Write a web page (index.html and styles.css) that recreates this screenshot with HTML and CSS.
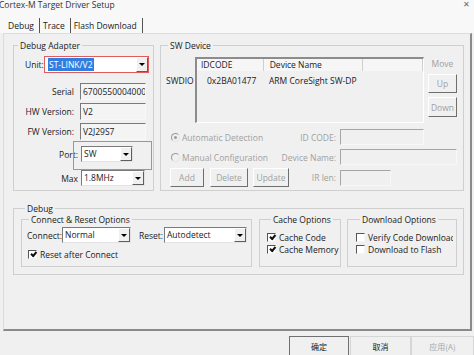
FILE: index.html
```html
<!DOCTYPE html>
<html lang="en">
<head>
    <meta charset="UTF-8">
    <title>Cortex-M Target Driver Setup</title>
    <link rel="stylesheet" href="styles.css">
</head>
<body>
    <div class="titlebar">
        <span class="title">Cortex-M Target Driver Setup</span>
        <span class="close">✕</span>
    </div>
    <div class="tabs">
        <span class="tab first">Debug</span><span class="tab">Trace</span><span class="tab">Flash Download</span>
    </div>

    <div class="panel">
        <div class="top-row">
            <fieldset class="group adapter">
                <legend>Debug Adapter</legend>
                <div class="unit-row">
                    <span class="unit-lbl">Unit:</span>
                    <div class="combo combo-unit"><span class="val"><span class="sel">ST-LINK/V2</span></span><span class="dd"></span></div>
                </div>
                <div class="field-row r-serial"><span class="lbl">Serial</span><div class="edit w-info">670055000400000</div></div>
                <div class="field-row r-hw"><span class="lbl">HW Version:</span><div class="edit w-info">V2</div></div>
                <div class="field-row r-fw"><span class="lbl">FW Version:</span><div class="edit w-info">V2J29S7</div></div>
                <div class="field-row r-port">
                    <span class="lbl lbl-short">Port:</span>
                    <div class="combo w-port"><span class="val">SW</span><span class="dd"></span></div>
                    <div class="mark"></div>
                </div>
                <div class="field-row r-max"><span class="lbl lbl-short">Max</span><div class="combo w-max"><span class="val">1.8MHz</span><span class="dd"></span></div></div>
            </fieldset>

            <fieldset class="group swdev">
                <legend>SW Device</legend>
                <div class="sw-top">
                    <span class="swdio">SWDIO</span>
                    <div class="devlist">
                        <div class="dl-head"><span class="c1">IDCODE</span><span class="c2">Device Name</span><span class="c3"></span></div>
                        <div class="dl-row"><span class="c1">0x2BA01477</span><span class="c2">ARM CoreSight SW-DP</span></div>
                    </div>
                    <div class="move-col">
                        <span class="move">Move</span>
                        <span class="wbtn b-up">Up</span>
                        <span class="wbtn b-down">Down</span>
                    </div>
                </div>
                <div class="sw-row r-auto">
                    <div class="sw-left"><i class="radio on"></i>Automatic Detection</div>
                    <span class="sw-lbl">ID CODE:</span>
                    <div class="slot"><div class="edit dis w-id"></div></div>
                </div>
                <div class="sw-row r-manual">
                    <div class="sw-left"><i class="radio"></i>Manual Configuration</div>
                    <span class="sw-lbl">Device Name:</span>
                    <div class="slot"><div class="edit dis w-name"></div></div>
                </div>
                <div class="sw-row r-btns">
                    <div class="sw-left btns">
                        <span class="wbtn b-add">Add</span>
                        <span class="wbtn b-del">Delete</span>
                        <span class="wbtn b-upd">Update</span>
                    </div>
                    <span class="sw-lbl">IR len:</span>
                    <div class="slot"><div class="edit dis w-ir"></div></div>
                </div>
            </fieldset>
        </div>

        <fieldset class="group debug">
            <legend>Debug</legend>
            <div class="debug-row">
                <fieldset class="group conn">
                    <legend>Connect &amp; Reset Options</legend>
                    <div class="conn-row">
                        <span class="conn-lbl">Connect:</span>
                        <div class="combo w-connect"><span class="val">Normal</span><span class="dd"></span></div>
                        <span class="reset-lbl">Reset:</span>
                        <div class="combo w-reset"><span class="val">Autodetect</span><span class="dd"></span></div>
                    </div>
                    <div class="check-row r-after"><i class="chk on"></i>Reset after Connect</div>
                </fieldset>
                <fieldset class="group cache">
                    <legend>Cache Options</legend>
                    <div class="check-row"><i class="chk on"></i>Cache Code</div>
                    <div class="check-row"><i class="chk on"></i>Cache Memory</div>
                </fieldset>
                <fieldset class="group download">
                    <legend>Download Options</legend>
                    <div class="check-row"><i class="chk"></i>Verify Code Download</div>
                    <div class="check-row"><i class="chk"></i>Download to Flash</div>
                </fieldset>
            </div>
        </fieldset>
    </div>

    <div class="footer">
        <span class="fbtn default">确定</span>
        <span class="fbtn">取消</span>
        <span class="fbtn off">应用(A)</span>
    </div>
</body>
</html>
```

FILE: styles.css
```css
* {
    box-sizing: border-box;
}
body {
    margin: 0;
    width: 474px;
    height: 355px;
    overflow: hidden;
    background-color: #f0f0f0;
    font-family: "Open Sans", "Noto Sans CJK SC", sans-serif;
    font-size: 8.5px;
    line-height: 11px;
    color: #1a1a1a;
}
.titlebar {
    height: 17px;
    background-color: #f8f8f8;
    display: flex;
    justify-content: space-between;
}
.title {
    margin: -1px 0 0 -1px;
    color: #333;
}
.close {
    margin: -1px 4px 0 0;
    font-size: 8px;
    line-height: 9px;
    color: #666;
}
.tabs {
    height: 16px;
    display: flex;
    align-items: center;
    background-color: #f8f8f8;
}
.tab {
    padding: 0 5px 0 3px;
    border-right: 1px solid #555;
    line-height: 15px;
}
.tab.first {
    margin-left: 5px;
}
.panel {
    margin-left: 3px;
    width: 469px;
    height: 298px;
    border: 1px solid #dcdcdc;
    border-right: 2px solid #8a8a8a;
    border-bottom: 2px solid #8a8a8a;
    padding: 6px 0 0 9px;
}

/* group boxes */
.group {
    margin: 0;
    min-width: 0;
    padding: 0;
    border: 1px solid #cfcfcf;
}
.group legend {
    padding: 0 2px;
    margin-left: 3px;
    line-height: 11px;
}
.top-row {
    display: flex;
    gap: 6px;
}
.adapter {
    width: 141px;
    height: 151px;
    padding-top: 5px;
}
.adapter legend {
    margin-left: 4px;
}
.swdev {
    width: 304px;
    height: 151px;
    padding: 6px 6px 0 5px;
}
.swdev legend {
    margin-left: 2px;
}

/* windows controls */
.combo {
    display: flex;
    height: 16px;
    background-color: #fff;
    border: 1px solid;
    border-color: #7a7a7a #e3e3e3 #e3e3e3 #7a7a7a;
}
.combo .val {
    flex: 1;
    padding-left: 2px;
    line-height: 14px;
    white-space: nowrap;
    overflow: hidden;
}
.combo .dd {
    width: 12px;
    display: flex;
    align-items: center;
    justify-content: center;
    background-color: #f0f0f0;
    border: 1px solid;
    border-color: #fff #5e5e5e #5e5e5e #fff;
}
.combo .dd::after {
    content: "";
    border-left: 3px solid transparent;
    border-right: 3px solid transparent;
    border-top: 3px solid #000;
}
.edit {
    height: 17px;
    padding-left: 2px;
    line-height: 15px;
    white-space: nowrap;
    overflow: hidden;
    background-color: #f4f4f4;
    border: 1px solid;
    border-color: #7a7a7a #f8f8f8 #f8f8f8 #7a7a7a;
}
.edit.dis {
    height: 16px;
    background-color: #f0f0f0;
    border-color: #a6a6a6 #f8f8f8 #f8f8f8 #a6a6a6;
}
.wbtn {
    display: flex;
    align-items: center;
    justify-content: center;
    color: #a0a0a0;
    background-color: #f0f0f0;
    border: 1px solid;
    border-color: #fff #6e6e6e #6e6e6e #fff;
}
.chk {
    width: 9px;
    height: 9px;
    margin-right: 3px;
    flex: none;
    background-color: #fff;
    border: 1px solid;
    border-color: #555 #f4f4f4 #f4f4f4 #555;
    position: relative;
}
.chk.on::after {
    content: "";
    position: absolute;
    left: 1px;
    top: 0;
    width: 4px;
    height: 2px;
    border-left: 2px solid #111;
    border-bottom: 2px solid #111;
    transform: rotate(-50deg) translate(0, 1px);
}
.radio {
    width: 9px;
    height: 9px;
    margin-right: 2px;
    flex: none;
    border-radius: 50%;
    border: 1px solid;
    border-color: #9a9a9a #e6e6e6 #e6e6e6 #9a9a9a;
    background-color: #f0f0f0;
    display: flex;
    align-items: center;
    justify-content: center;
}
.radio.on::after {
    content: "";
    width: 3px;
    height: 3px;
    border-radius: 50%;
    background-color: #9a9a9a;
}

/* debug adapter */
.unit-row {
    display: flex;
    height: 17px;
    align-items: center;
}
.unit-lbl {
    width: 30px;
    padding-left: 11px;
}
.combo-unit {
    width: 105px;
    height: 17px;
    border: 1px solid #e05c5c;
    padding: 1px 0 1px 3px;
}
.combo-unit .val {
    padding-left: 0;
    line-height: 13px;
}
.combo-unit .sel {
    display: inline-block;
    padding: 0 1px;
    background-color: #2f7fe0;
    color: #fff;
}
.combo-unit .dd {
    margin: -1px 0;
}
.field-row {
    display: flex;
    align-items: center;
    position: relative;
}
.field-row .lbl {
    width: 60px;
    margin-right: 6px;
    text-align: right;
}
.field-row .lbl-short {
    width: 64px;
    margin-right: 3px;
}
.w-info {
    width: 66px;
}
.r-serial { margin-top: 10px; }
.r-hw { margin-top: 3px; }
.r-fw { margin-top: 3px; }
.r-port { margin-top: 6px; }
.r-max { margin-top: 8px; }
.w-port {
    width: 52px;
}
.w-max {
    width: 64px;
}
.mark {
    position: absolute;
    left: 59px;
    top: -5px;
    width: 79px;
    height: 29px;
    border: 1px solid #e07a7a;
}

/* sw device */
.sw-top {
    display: flex;
    height: 66px;
}
.swdio {
    width: 29px;
    padding-top: 18px;
}
.devlist {
    width: 229px;
    border-top: 2px solid #8c8c8c;
    border-left: 2px solid #8c8c8c;
    border-right: 1px solid #fff;
    border-bottom: 1px solid #fff;
}
.dl-head, .dl-row {
    display: flex;
    height: 12px;
}
.dl-head span {
    border-right: 1px solid #cfcfcf;
    background-color: #f6f6f6;
}
.dl-head .c1 { width: 67px; padding-left: 4px; }
.dl-head .c2 { width: 100px; padding-left: 6px; }
.dl-head .c3 { width: 60px; }
.dl-row {
    margin-top: 4px;
}
.dl-row .c1 { width: 67px; padding-left: 10px; }
.dl-row .c2 { padding-left: 5px; }
.move-col {
    width: 29px;
    margin-left: 4px;
    display: flex;
    flex-direction: column;
}
.move {
    margin-top: 1px;
    text-align: center;
    color: #a0a0a0;
}
.b-up {
    height: 19px;
    margin-top: 5px;
}
.b-down {
    height: 20px;
    margin-top: 4px;
}
.sw-row {
    display: flex;
    align-items: center;
}
.sw-left {
    flex: 1;
    display: flex;
    align-items: center;
    padding-left: 5px;
    color: #a0a0a0;
}
.sw-lbl {
    margin-right: 4px;
    color: #a0a0a0;
}
.slot {
    width: 117px;
}
.r-auto { margin-top: 6px; }
.r-manual { margin-top: 4px; }
.r-btns { margin-top: 3px; }
.w-id { width: 84px; }
.w-name { width: 117px; }
.w-ir { width: 51px; height: 17px; }
.btns {
    padding-left: 4px;
}
.btns .wbtn {
    height: 19px;
}
.b-add { width: 34px; }
.b-del { width: 38px; margin-left: 6px; }
.b-upd { width: 36px; margin-left: 5px; }

/* debug */
.debug {
    margin-top: 12px;
    width: 451px;
    height: 72px;
    padding: 0 0 0 7px;
}
.debug legend {
    margin-left: 4px;
}
.debug-row {
    display: flex;
    gap: 6px;
}
.conn {
    width: 231px;
    height: 53px;
    padding: 2px 0 0 5px;
}
.conn legend {
    margin-left: 2px;
}
.conn-row {
    display: flex;
    align-items: center;
}
.conn-lbl {
    width: 35px;
}
.w-connect {
    width: 69px;
}
.reset-lbl {
    width: 25px;
    margin-left: 8px;
}
.w-reset {
    width: 83px;
}
.check-row {
    display: flex;
    align-items: center;
    height: 12px;
    white-space: nowrap;
    overflow: hidden;
}
.r-after {
    margin-top: 5px;
    padding-left: 1px;
}
.cache {
    width: 82px;
    height: 53px;
    margin-left: 1px;
    padding: 6px 0 0 7px;
}
.download {
    width: 110px;
    height: 53px;
    padding: 6px 3px 0 8px;
}

/* footer buttons */
.footer {
    display: flex;
    padding: 5px 0 0 289px;
}
.fbtn {
    height: 22px;
    line-height: 19px;
    text-align: center;
    font-family: "Noto Sans CJK SC", sans-serif;
    font-size: 8px;
    border: 1px solid #d6d6d6;
    background-color: #f0f0f0;
}
.fbtn.default {
    width: 60px;
    border-color: #707070;
}
.fbtn:nth-child(2) {
    width: 61px;
    margin-left: 1px;
}
.fbtn.off {
    width: 63px;
    color: #a6a6a6;
}
```
